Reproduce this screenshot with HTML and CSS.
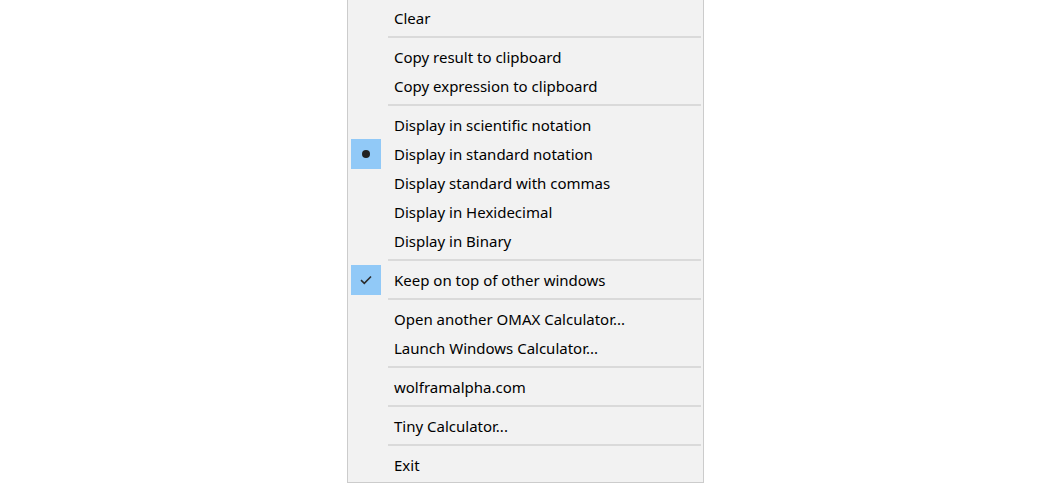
FILE: index.html
```html
<!DOCTYPE html>
<html lang="en">
<head>
    <meta charset="UTF-8">
    <title>Calculator Menu</title>
    <link rel="stylesheet" href="styles.css">
</head>
<body>
    <div class="menu">
        <div class="item"><span class="mark"></span><span class="label">Clear</span></div>
        <div class="sep"></div>
        <div class="item"><span class="mark"></span><span class="label">Copy result to clipboard</span></div>
        <div class="item"><span class="mark"></span><span class="label">Copy expression to clipboard</span></div>
        <div class="sep"></div>
        <div class="item"><span class="mark"></span><span class="label">Display in scientific notation</span></div>
        <div class="item"><span class="mark on"><span class="dot"></span></span><span class="label">Display in standard notation</span></div>
        <div class="item"><span class="mark"></span><span class="label">Display standard with commas</span></div>
        <div class="item"><span class="mark"></span><span class="label">Display in Hexidecimal</span></div>
        <div class="item"><span class="mark"></span><span class="label">Display in Binary</span></div>
        <div class="sep"></div>
        <div class="item">
            <span class="mark on">
                <svg width="12" height="10" viewBox="0 0 12 10"><path d="M1 5.2 L4.3 8.3 L11 1.5" fill="none" stroke="#2b2b2b" stroke-width="1.6"/></svg>
            </span>
            <span class="label">Keep on top of other windows</span>
        </div>
        <div class="sep"></div>
        <div class="item"><span class="mark"></span><span class="label">Open another OMAX Calculator...</span></div>
        <div class="item"><span class="mark"></span><span class="label">Launch Windows Calculator...</span></div>
        <div class="sep"></div>
        <div class="item"><span class="mark"></span><span class="label">wolframalpha.com</span></div>
        <div class="sep"></div>
        <div class="item"><span class="mark"></span><span class="label">Tiny Calculator...</span></div>
        <div class="sep"></div>
        <div class="item"><span class="mark"></span><span class="label">Exit</span></div>
    </div>
</body>
</html>
```

FILE: styles.css
```css
/* Page */
body {
    margin: 0;
    padding-left: 1px;
    background: #fff;
    font-family: 'Noto Sans', 'Open Sans', sans-serif;
    display: flex;
    justify-content: center;
}

/* Popup menu */
.menu {
    width: 353px;
    background: #f2f2f2;
    border: 1px solid #cccccc;
    border-top: none;
    padding: 3px 2px 3px 0;
}

.item {
    display: flex;
    align-items: center;
    height: 29px;
    padding-left: 3px;
    font-size: 15px;
    color: #000;
}

.mark {
    width: 30px;
    height: 30px;
    margin-right: 13px;
    display: flex;
    align-items: center;
    justify-content: center;
    flex-shrink: 0;
}

.mark.on {
    background: #91c9f7;
}

.dot {
    width: 8px;
    height: 8px;
    border-radius: 50%;
    background: #222;
}

.label {
    white-space: nowrap;
}

.sep {
    height: 10px;
    margin-left: 40px;
    display: flex;
    align-items: center;
}

.sep::after {
    content: "";
    flex: 1;
    height: 2px;
    background: #dadada;
}
```
